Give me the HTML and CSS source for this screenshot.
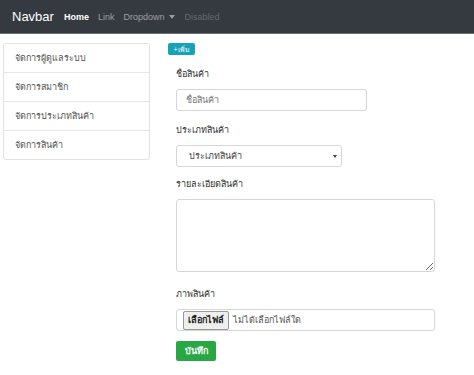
FILE: index.html
```html
<!DOCTYPE html>
<html>
<head>
    <meta charset="utf-8" />
    <title>จัดการสินค้า</title>
    <link rel="stylesheet" href="styles.css">
</head>
<body>

<nav class="navbar">
    <span class="brand">Navbar</span>
    <a href="#" class="nav-link active">Home</a>
    <a href="#" class="nav-link">Link</a>
    <a href="#" class="nav-link">Dropdown <span class="caret"></span></a>
    <a href="#" class="nav-link disabled">Disabled</a>
</nav>

<div class="page">
    <div class="sidebar">
        <div class="list-group">
            <a href="#" class="list-item">จัดการผู้ดูแลระบบ</a>
            <a href="#" class="list-item">จัดการสมาชิก</a>
            <a href="#" class="list-item">จัดการประเภทสินค้า</a>
            <a href="#" class="list-item">จัดการสินค้า</a>
        </div>
    </div>

    <div class="content">
        <button class="btn btn-add">+เพิ่ม</button>
        <form class="product-form">
            <div class="form-group">
                <label>ชื่อสินค้า</label>
                <input type="text" class="input input-name" placeholder="ชื่อสินค้า">
            </div>
            <div class="form-group">
                <label>ประเภทสินค้า</label>
                <div class="select">
                    <span>ประเภทสินค้า</span>
                    <span class="caret small"></span>
                </div>
            </div>
            <div class="form-group group-detail">
                <label>รายละเอียดสินค้า</label>
                <textarea class="textarea"></textarea>
            </div>
            <div class="form-group group-image">
                <label>ภาพสินค้า</label>
                <div class="file-input">
                    <span class="file-btn">เลือกไฟล์</span>
                    <span class="file-name">ไม่ได้เลือกไฟล์ใด</span>
                </div>
            </div>
            <button type="button" class="btn btn-save">บันทึก</button>
        </form>
    </div>
</div>

</body>
</html>
```

FILE: styles.css
```css
body, html {
    margin: 0;
    padding: 0;
    font-family: "Liberation Sans", "Noto Sans", sans-serif;
    color: #333;
    background: #fff;
}
.navbar {
    height: 34px;
    background-color: #343a40;
    display: flex;
    align-items: center;
    padding: 0 12px;
    box-sizing: border-box;
    border-bottom: 1px solid #6c6f74;
}
.brand {
    color: #fff;
    font-size: 13px;
    margin-right: 10px;
}
.nav-link {
    color: rgba(255,255,255,0.5);
    text-decoration: none;
    font-size: 9px;
    margin-right: 9px;
    display: flex;
    align-items: center;
}
.nav-link.active {
    color: #fff;
    font-weight: bold;
}
.nav-link.disabled {
    color: rgba(255,255,255,0.25);
}
.caret {
    display: inline-block;
    margin-left: 5px;
    border-top: 4px solid currentColor;
    border-left: 3px solid transparent;
    border-right: 3px solid transparent;
}
.caret.small {
    border-top-width: 3px;
    border-left-width: 2px;
    border-right-width: 2px;
    color: #444;
}
.page {
    display: flex;
    padding-top: 9px;
}
.sidebar {
    width: 150px;
    padding-left: 3px;
    box-sizing: border-box;
}
.list-group {
    border: 1px solid #e2e2e2;
    border-radius: 3px;
}
.list-item {
    display: block;
    height: 28px;
    line-height: 28px;
    padding-left: 11px;
    font-size: 9px;
    color: #555;
    text-decoration: none;
    border-bottom: 1px solid #e6e6e6;
}
.list-item:last-child {
    border-bottom: none;
}
.content {
    padding-left: 18px;
    flex: 1;
}
.btn {
    border: none;
    color: #fff;
    font-family: inherit;
    border-radius: 2px;
    cursor: pointer;
    padding: 0;
}
.btn-add {
    background-color: #17a2b8;
    font-size: 7px;
    height: 12px;
    width: 27px;
    display: block;
}
.product-form {
    padding-left: 8px;
    width: 259px;
}
.form-group {
    margin-top: 12px;
}
.form-group.group-detail {
    margin-top: 10px;
}
.form-group.group-image {
    margin-top: 15px;
}
.form-group label {
    display: block;
    font-size: 9px;
    color: #333;
    height: 14px;
    line-height: 14px;
    margin-bottom: 8px;
}
.input, .select, .textarea, .file-input {
    box-sizing: border-box;
    border: 1px solid #d6d6d6;
    border-radius: 3px;
    background: #fff;
    font-family: inherit;
    font-size: 9px;
    margin: 0;
    display: block;
}
.input-name {
    width: 191px;
    height: 22px;
    padding: 0 9px;
}
.input-name::placeholder {
    color: #777;
}
.select {
    width: 166px;
    height: 22px;
    padding: 0 4px 0 12px;
    display: flex;
    align-items: center;
    justify-content: space-between;
    color: #444;
}
.textarea {
    width: 259px;
    height: 73px;
    resize: vertical;
}
.file-input {
    width: 259px;
    height: 22px;
    display: flex;
    align-items: center;
    padding: 0 6px;
    color: #555;
}
.file-btn {
    background: #efefef;
    border: 1px solid #999;
    border-radius: 2px;
    font-weight: bold;
    color: #222;
    padding: 1px 4px;
    margin-right: 4px;
    height: 15px;
    line-height: 15px;
}
.btn-save {
    margin-top: 10px;
    background-color: #28a745;
    font-size: 9px;
    font-weight: bold;
    width: 40px;
    height: 20px;
    border-radius: 2px;
}
```
